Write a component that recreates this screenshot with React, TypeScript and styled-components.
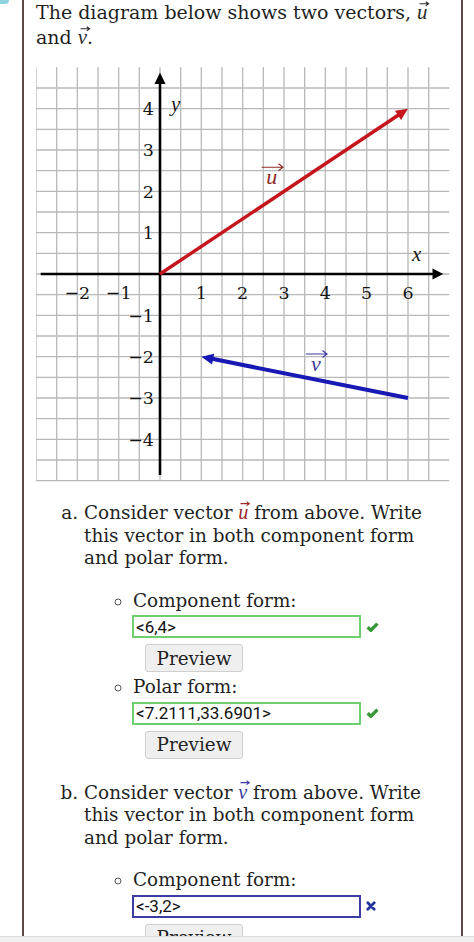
import React from "react"
import styled, { createGlobalStyle } from "styled-components"

const GlobalStyle = createGlobalStyle`
  html, body {
    margin: 0;
    padding: 0;
    background: #fff;
  }
  body {
    font-family: "DejaVu Serif", "Liberation Serif", serif;
    color: #1f1f1f;
  }
`

const MATH = `"Liberation Serif", "DejaVu Serif", serif`

const U = 41.333
const OX = 124
const OY = 212

const px = (x: number) => OX + x * U
const py = (y: number) => OY - y * U

// line end + filled head for an arrow from (x1,y1) to (x2,y2), svg coords
function arrowParts(x1: number, y1: number, x2: number, y2: number, len: number, hw: number) {
  const dx = x2 - x1
  const dy = y2 - y1
  const d = Math.hypot(dx, dy)
  const ux = dx / d
  const uy = dy / d
  const bx = x2 - ux * len
  const by = y2 - uy * len
  const pts = [
    [x2, y2],
    [bx - uy * hw, by + ux * hw],
    [bx + uy * hw, by - ux * hw],
  ]
  return { bx: bx + ux * 1, by: by + uy * 1, points: pts.map(p => p.join(",")).join(" ") }
}

const Frame = styled.main`
  position: relative;
  margin-left: 22px;
  width: 409px;
  min-height: 100vh;
  padding: 0 16px 40px 12px;
  border-left: 2px solid #5e4848;
  border-right: 2px solid #5e4848;
`

const Tab = styled.div`
  position: absolute;
  top: 0;
  left: 0;
  width: 9px;
  height: 4px;
  background: #8fd3e3;
  border-bottom-right-radius: 4px;
`

const Intro = styled.p`
  margin: 0;
  font-size: 19px;
  line-height: 25px;
`

const VecWrap = styled.span<{ $color: string }>`
  position: relative;
  display: inline-block;
  font-family: ${MATH};
  font-style: italic;
  font-size: 1.1em;
  line-height: 1;
  color: ${p => p.$color};
`

const VecArrow = styled.svg`
  position: absolute;
  left: 0.1em;
  top: -0.12em;
  width: 0.5em;
  height: 0.36em;
  overflow: visible;
`

const Graph = styled.svg`
  display: block;
  margin-top: 12px;
  font-family: "DejaVu Serif", serif;
`

const Parts = styled.ol`
  margin: 16px 0 0;
  padding-left: 48px;
  list-style: lower-alpha;
`

const Part = styled.li`
  font-size: 18.4px;
  line-height: 22.5px;
  & + & {
    margin-top: 23px;
  }
`

const Prompt = styled.p`
  margin: 0;
`

const Fields = styled.ul`
  margin: 20px 0 0;
  padding-left: 49px;
  list-style: circle;
  & li::marker {
    color: #555;
  }
`

const Field = styled.li`
  & + & {
    margin-top: 4px;
  }
`

const AnswerRow = styled.div`
  display: flex;
  align-items: center;
  gap: 5px;
  margin-top: 3px;
`

const Answer = styled.input<{ $state: "correct" | "wrong" }>`
  box-sizing: border-box;
  width: 229px;
  height: 23px;
  margin: 0 0 0 -1px;
  padding: 0 2px;
  font-family: Roboto, "Liberation Sans", sans-serif;
  font-size: 17px;
  color: #111;
  background: #fff;
  border: 2px solid ${p => (p.$state === "correct" ? "#6fcf6f" : "#3c3ca6")};
  outline: none;
`

const PreviewButton = styled.button`
  display: block;
  box-sizing: border-box;
  width: 98px;
  height: 28px;
  margin: 6px 0 0 12px;
  padding: 0;
  font-family: "DejaVu Serif", serif;
  font-size: 18.4px;
  color: #222;
  background: #efefef;
  border: 1px solid #cfcfcf;
  border-radius: 3px;
`

const BottomBar = styled.div`
  position: fixed;
  left: 0;
  right: 0;
  bottom: 0;
  height: 5px;
  background: #f1f1f1;
  border-top: 1px solid #dcdcdc;
`

function Vec({ letter, color }: { letter: string; color: string }) {
  return (
    <VecWrap $color={color}>
      {letter}
      <VecArrow viewBox="0 0 10 6">
        <path d="M0.5 3 H9 M6.5 1 L9.2 3 L6.5 5" fill="none" stroke={color} strokeWidth="1.1" />
      </VecArrow>
    </VecWrap>
  )
}

function CheckMark() {
  return (
    <svg width="13" height="10" viewBox="0 0 13 10">
      <path d="M1.6 5.2 L4.9 8.2 L11.4 1.6" fill="none" stroke="#379837" strokeWidth="3.4" strokeLinejoin="round" />
    </svg>
  )
}

function CrossMark() {
  return (
    <svg width="10" height="10" viewBox="0 0 10 10">
      <path d="M1.8 1.8 L8.2 8.2 M8.2 1.8 L1.8 8.2" stroke="#2236a0" strokeWidth="2.8" strokeLinecap="round" />
    </svg>
  )
}

function VectorGraph() {
  const verticals = Array.from({ length: 20 }, (_, i) => -3 + i * 0.5)
  const horizontals = Array.from({ length: 20 }, (_, i) => -5 + i * 0.5)
  const xLabels = [-2, -1, 1, 2, 3, 4, 5, 6]
  const yLabels = [4, 3, 2, 1, -1, -2, -3, -4]
  const u = arrowParts(px(0), py(0), px(6), py(4), 12, 5.5)
  const v = arrowParts(px(6), py(-3), px(1), py(-2), 12, 5.5)

  return (
    <Graph width="414" height="424" viewBox="0 0 414 424">
      <g stroke="#b9b9b9" strokeWidth="1.3">
        {verticals.map(x => (
          <line key={"v" + x} x1={px(x)} x2={px(x)} y1={py(5)} y2={py(-5)} />
        ))}
        {horizontals.map(y => (
          <line key={"h" + y} x1={px(-3)} x2={px(7)} y1={py(y)} y2={py(y)} />
        ))}
      </g>

      <g stroke="#000" strokeWidth="2.6">
        <line x1={4.7} y1={OY} x2={397.5} y2={OY} />
        <line x1={OX} y1={413} x2={OX} y2={21.5} />
      </g>
      <polygon points={`407.3,${OY} 396.5,${OY - 5.5} 396.5,${OY + 5.5}`} fill="#000" />
      <polygon points={`${OX},10.5 ${OX - 5.5},22 ${OX + 5.5},22`} fill="#000" />

      <g fontSize="17.5" fill="#151515">
        {xLabels.map(k => (
          <text key={"x" + k} x={px(k)} y={237} textAnchor="middle">
            {k < 0 ? "\u2212" + -k : k}
          </text>
        ))}
        {yLabels.map(k => (
          <text key={"y" + k} x={118} y={py(k) + 6.2} textAnchor="end">
            {k < 0 ? "\u2212" + -k : k}
          </text>
        ))}
      </g>
      <g fontFamily={MATH} fontStyle="italic" fill="#1a1a1a" fontSize="21">
        <text x={135} y={49}>y</text>
        <text x={376} y={199}>x</text>
      </g>

      <line x1={px(0)} y1={py(0)} x2={u.bx} y2={u.by} stroke="#c4161c" strokeWidth="3.4" />
      <polygon points={u.points} fill="#c4161c" />
      <line x1={px(6)} y1={py(-3)} x2={v.bx} y2={v.by} stroke="#1818b4" strokeWidth="4" />
      <polygon points={v.points} fill="#1818b4" />

      <g fontFamily={MATH} fontStyle="italic" fontSize="22" textAnchor="middle">
        <text x={235.7} y={122} fill="#8e2a2a">u</text>
        <text x={280} y={309} fill="#3a3a9c">v</text>
      </g>
      <path d="M225.7 105.3 H246.7 M242.5 101.8 L247 105.3 L242.5 108.8" fill="none" stroke="#8e2a2a" strokeWidth="1.1" />
      <path d="M270 292 H290.7 M286.5 288.5 L291 292 L286.5 295.5" fill="none" stroke="#3a3a9c" strokeWidth="1.1" />
    </Graph>
  )
}

export default function App() {
  return (
    <>
      <GlobalStyle />
      <Tab />
      <Frame>
        <Intro>
          The diagram below shows two vectors, <Vec letter="u" color="#2a2a2a" /> and{" "}
          <Vec letter="v" color="#2a2a2a" />.
        </Intro>

        <VectorGraph />

        <Parts>
          <Part>
            <Prompt>
              Consider vector <Vec letter="u" color="#9c2a2a" /> from above. Write this vector in both
              component form and polar form.
            </Prompt>
            <Fields>
              <Field>
                Component form:
                <AnswerRow>
                  <Answer $state="correct" defaultValue="<6,4>" />
                  <CheckMark />
                </AnswerRow>
                <PreviewButton>Preview</PreviewButton>
              </Field>
              <Field>
                Polar form:
                <AnswerRow>
                  <Answer $state="correct" defaultValue="<7.2111,33.6901>" />
                  <CheckMark />
                </AnswerRow>
                <PreviewButton>Preview</PreviewButton>
              </Field>
            </Fields>
          </Part>
          <Part>
            <Prompt>
              Consider vector <Vec letter="v" color="#3a3a9c" /> from above. Write this vector in both
              component form and polar form.
            </Prompt>
            <Fields>
              <Field>
                Component form:
                <AnswerRow>
                  <Answer $state="wrong" defaultValue="<-3,2>" />
                  <CrossMark />
                </AnswerRow>
                <PreviewButton>Preview</PreviewButton>
              </Field>
              <Field>
                Polar form:
                <AnswerRow>
                  <Answer $state="wrong" defaultValue="" />
                </AnswerRow>
                <PreviewButton>Preview</PreviewButton>
              </Field>
            </Fields>
          </Part>
        </Parts>
      </Frame>
      <BottomBar />
    </>
  )
}
